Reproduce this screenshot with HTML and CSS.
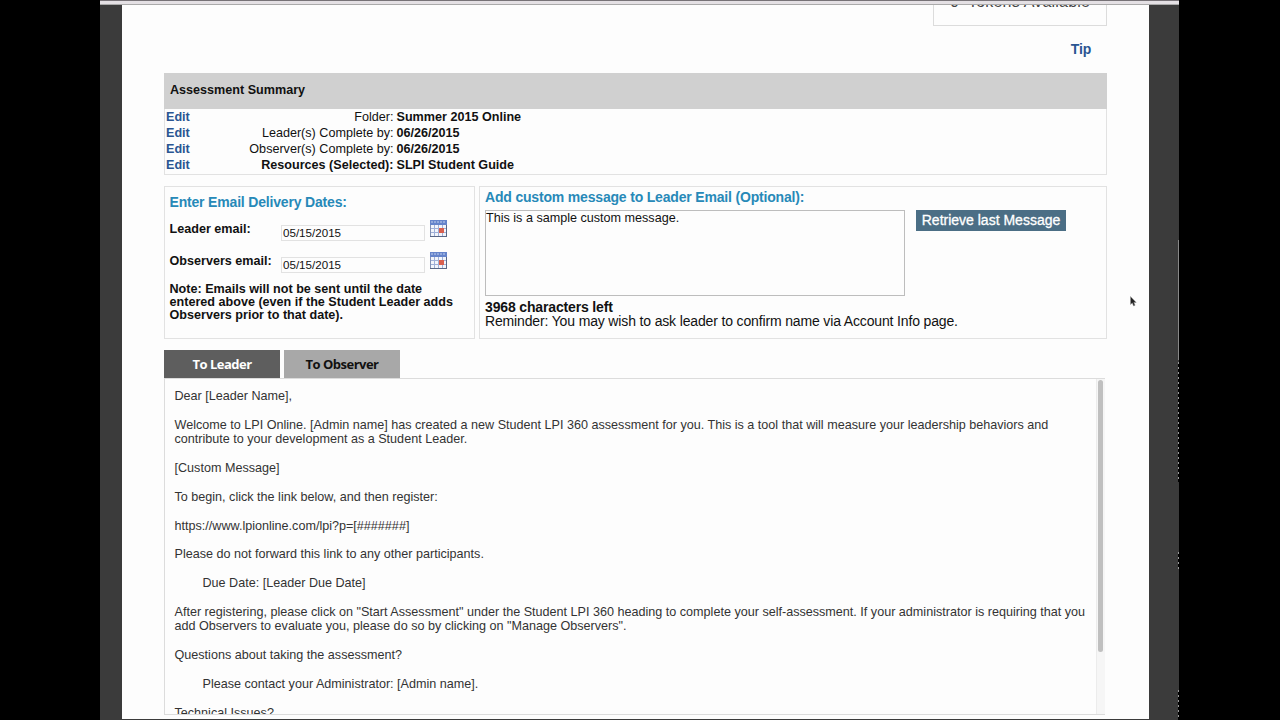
FILE: index.html
```html
<!DOCTYPE html>
<html lang="en">
<head>
    <meta charset="UTF-8">
    <title>Assessment Summary</title>
    <link rel="stylesheet" href="styles.css">
</head>
<body>
    <div class="window">
        <div class="toolbar"></div>
        <div class="page">
            <div class="tokens"><span>0&nbsp; Tokens Available</span></div>
            <div class="tip"><a href="#">Tip</a></div>

            <div class="summary">
                <h2>Assessment Summary</h2>
                <div class="row"><a href="#">Edit</a><span class="name">Folder:</span><b>Summer 2015 Online</b></div>
                <div class="row"><a href="#">Edit</a><span class="name">Leader(s) Complete by:</span><b>06/26/2015</b></div>
                <div class="row"><a href="#">Edit</a><span class="name">Observer(s) Complete by:</span><b>06/26/2015</b></div>
                <div class="row"><a href="#">Edit</a><b class="name">Resources (Selected):</b><b>SLPI Student Guide</b></div>
            </div>

            <div class="panels">
                <div class="panel dates">
                    <h3>Enter Email Delivery Dates:</h3>
                    <div class="date-row">
                        <label for="leader-date">Leader email:</label>
                        <input type="text" id="leader-date" value="05/15/2015">
                        <svg class="calendar" viewBox="0 0 17 17">
                            <rect x="0.5" y="0.5" width="16" height="16" fill="#f2f5fb" stroke="#8291b5"/>
                            <rect x="0" y="0" width="17" height="5" fill="#6584cb"/>
                            <path d="M2 1v2M5 1v2M8 1v2M11 1v2M14 1v2" stroke="#c3d0ee"/>
                            <path d="M1 8.5h15M1 12.5h15M4.5 5v11M8.5 5v11M12.5 5v11" stroke="#9fb0d8"/>
                            <rect x="9" y="8" width="5" height="5" fill="#d9604f"/>
                            <path d="M0 16.5h17M16.5 5v12" stroke="#596786"/>
                        </svg>
                    </div>
                    <div class="date-row">
                        <label for="observer-date">Observers email:</label>
                        <input type="text" id="observer-date" value="05/15/2015">
                        <svg class="calendar" viewBox="0 0 17 17">
                            <rect x="0.5" y="0.5" width="16" height="16" fill="#f2f5fb" stroke="#8291b5"/>
                            <rect x="0" y="0" width="17" height="5" fill="#6584cb"/>
                            <path d="M2 1v2M5 1v2M8 1v2M11 1v2M14 1v2" stroke="#c3d0ee"/>
                            <path d="M1 8.5h15M1 12.5h15M4.5 5v11M8.5 5v11M12.5 5v11" stroke="#9fb0d8"/>
                            <rect x="9" y="8" width="5" height="5" fill="#d9604f"/>
                            <path d="M0 16.5h17M16.5 5v12" stroke="#596786"/>
                        </svg>
                    </div>
                    <p class="note">Note: Emails will not be sent until the date<br>entered above (even if the Student Leader adds<br>Observers prior to that date).</p>
                </div>
                <div class="panel custom">
                    <h3>Add custom message to Leader Email (Optional):</h3>
                    <div class="custom-row">
                        <textarea>This is a sample custom message.</textarea>
                        <button class="retrieve">Retrieve last Message</button>
                    </div>
                    <p class="left"><b>3968</b> <b>characters left</b></p>
                    <p class="reminder">Reminder: You may wish to ask leader to confirm name via Account Info page.</p>
                </div>
            </div>

            <div class="tabs">
                <button class="tab active">To Leader</button>
                <button class="tab">To Observer</button>
            </div>
            <div class="message">
                <div class="email">
                    <p>Dear [Leader Name],</p>
                    <p>Welcome to LPI Online. [Admin name] has created a new Student LPI 360 assessment for you. This is a tool that will measure your leadership behaviors and<br>contribute to your development as a Student Leader.</p>
                    <p>[Custom Message]</p>
                    <p>To begin, click the link below, and then register:</p>
                    <p>https://www.lpionline.com/lpi?p=[#######]</p>
                    <p>Please do not forward this link to any other participants.</p>
                    <p class="indent">Due Date: [Leader Due Date]</p>
                    <p>After registering, please click on "Start Assessment" under the Student LPI 360 heading to complete your self-assessment. If your administrator is requiring that you<br>add Observers to evaluate you, please do so by clicking on "Manage Observers".</p>
                    <p>Questions about taking the assessment?</p>
                    <p class="indent">Please contact your Administrator: [Admin name].</p>
                    <p>Technical Issues?</p>
                </div>
                <div class="track"><div class="thumb"></div></div>
            </div>
        </div>
        <div class="edge solid"></div>
        <div class="edge dots"></div>
        <div class="edge dots short"></div>
        <div class="edge dots last"></div>
    </div>
    <svg class="cursor" viewBox="0 0 7 11">
        <path d="M0.5 0.5v8l1.8-1.6 1.3 3 1.5-.6-1.3-2.9h2.4z" fill="#222" stroke="#999" stroke-width=".5"/>
    </svg>
</body>
</html>
```

FILE: styles.css
```css
* {
    box-sizing: border-box;
}
body {
    margin: 0;
    height: 720px;
    background-color: #000;
    font-family: "Liberation Sans", Arial, sans-serif;
    font-size: 12.6px;
    color: #111;
    overflow: hidden;
}
h2, h3, p {
    margin: 0;
}
a {
    color: #2a5592;
    font-weight: bold;
    text-decoration: none;
}
.window {
    position: relative;
    width: 1079px;
    height: 720px;
    margin-left: 100px;
    background-color: #3b3b3b;
    overflow: hidden;
}
.toolbar {
    height: 5px;
    background-color: #e4e0e4;
    border-top: 1px solid #777277;
    border-bottom: 1px solid #aaa;
}
.page {
    width: 1027px;
    height: 714px;
    margin-left: 22px;
    padding: 0 42px;
    background-color: #fdfdfd;
    overflow: hidden;
}
.tokens {
    display: flex;
    align-items: flex-end;
    justify-content: center;
    width: 174px;
    height: 21px;
    margin-left: auto;
    padding-bottom: 15px;
    border: 1px solid #dcdcdc;
    border-top: 0;
    color: #444;
    font-size: 16px;
    letter-spacing: .2px;
    line-height: 17px;
    white-space: nowrap;
    overflow: hidden;
}
.tip {
    height: 47px;
    padding: 15px 16px 0 0;
    text-align: right;
    font-size: 14px;
    letter-spacing: -.2px;
    line-height: 16px;
}
.summary {
    height: 102px;
    border: 1px solid #e2e2e2;
    border-top: 0;
}
.summary h2 {
    height: 36px;
    margin: 0 -1px;
    padding-left: 6px;
    background-color: #d0d0d0;
    font-size: 12.6px;
    line-height: 35px;
}
.row {
    display: grid;
    grid-template-columns: 62px 165.5px 1fr;
    height: 16px;
    padding-left: 1px;
    line-height: 16px;
}
.row .name {
    text-align: right;
}
.row b:last-child {
    padding-left: 3px;
}
.panels {
    display: grid;
    grid-template-columns: 311px 628px;
    column-gap: 4px;
    height: 153px;
    margin-top: 11px;
}
.panel {
    border: 1px solid #e2e2e2;
}
.panel h3 {
    color: #2789b8;
    font-size: 14px;
    letter-spacing: -.18px;
    line-height: 16px;
}
.dates {
    padding: 7px 4.5px;
}
.date-row {
    display: grid;
    grid-template-columns: 111.5px 144px 22px;
    height: 32px;
}
.date-row label {
    padding-top: 11px;
    font-weight: bold;
    line-height: 16px;
}
.date-row input {
    width: 144px;
    height: 16px;
    margin-top: 15px;
    padding: 0 0 1px 1px;
    border: 1px solid #e2e2e2;
    background-color: #fdfdfd;
    color: #111;
    font-family: inherit;
    font-size: 11.6px;
}
.calendar {
    width: 17px;
    height: 17px;
    margin: 10px 0 0 5px;
}
.note {
    padding-top: 9px;
    font-weight: bold;
    line-height: 13.2px;
}
.custom {
    padding: 2px 5px;
}
.custom-row {
    display: flex;
    align-items: flex-start;
    gap: 11px;
    margin-top: 5px;
}
textarea {
    width: 420px;
    height: 86px;
    padding: 0;
    border: 1px solid #bdbdbd;
    border-radius: 0;
    background-color: #fdfdfd;
    color: #111;
    font-family: inherit;
    font-size: 12.6px;
    line-height: 15px;
    resize: none;
}
.retrieve {
    width: 150px;
    height: 21px;
    padding: 0 0 1px;
    border: 0;
    background-color: #4b6e85;
    color: #fff;
    font-family: inherit;
    font-size: 14px;
    -webkit-text-stroke: .3px #fff;
}
.left {
    padding-top: 4px;
    font-size: 14px;
    letter-spacing: -.15px;
    line-height: 14px;
}
.reminder {
    font-size: 14px;
    letter-spacing: -.15px;
    line-height: 14px;
}
.tabs {
    display: flex;
    gap: 4px;
    height: 28px;
    margin-top: 11px;
}
.tab {
    width: 116px;
    padding: 0;
    border: 0;
    background-color: #a8a8a8;
    color: #111;
    font-family: "Open Sans", sans-serif;
    font-size: 13px;
    font-weight: bold;
    letter-spacing: -.5px;
}
.tab.active {
    background-color: #5e5e5e;
    color: #fff;
}
.message {
    display: flex;
    width: 941px;
    height: 337px;
    border: 1px solid #dcdcdc;
    border-right: 0;
    overflow: hidden;
}
.email {
    flex: 1;
    padding: 10px 0 0 9.5px;
    color: #333;
    font-size: 12.6px;
    line-height: 14.4px;
    white-space: nowrap;
}
.email p {
    margin-bottom: 14.4px;
}
.email .indent {
    padding-left: 28px;
}
.track {
    width: 9px;
    padding: 1px 2px 1px 1px;
    background-color: #f6f6f6;
    border-left: 1px solid #ececec;
}
.thumb {
    width: 5px;
    height: 272px;
    border-radius: 3px;
    background-color: #c0c0c0;
}
/* scrollbar of the outer window, clipped at its right edge */
.edge {
    position: absolute;
    right: 0;
    width: 1px;
}
.edge.solid {
    top: 240px;
    height: 120px;
    background-color: #888;
}
.edge.dots {
    top: 362px;
    height: 120px;
    background: repeating-linear-gradient(#999 0 2px, #000 2px 5px);
}
.edge.short {
    top: 552px;
    height: 17px;
}
.edge.last {
    top: 690px;
    height: 30px;
}
.cursor {
    position: absolute;
    left: 1130px;
    top: 296px;
    width: 7px;
    height: 11px;
}
```
